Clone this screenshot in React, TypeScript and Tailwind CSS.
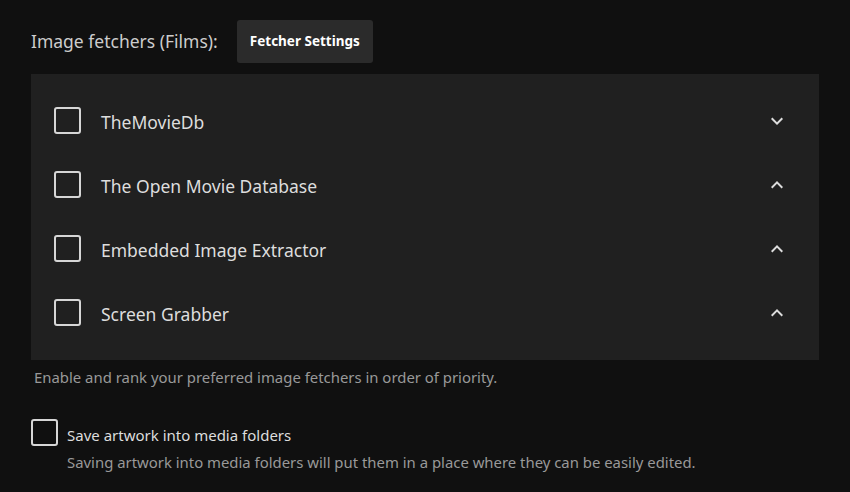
import { useState } from "react";

const fetchers = [
  { name: "TheMovieDb", open: true },
  { name: "The Open Movie Database", open: false },
  { name: "Embedded Image Extractor", open: false },
  { name: "Screen Grabber", open: false },
];

function Chevron({ down }: { down: boolean }) {
  return (
    <svg viewBox="0 0 24 24" className="w-6 h-6 fill-[#dddddd] mt-[1px]">
      {down ? (
        <path d="M16.59 8.59L12 13.17 7.41 8.59 6 10l6 6 6-6z" />
      ) : (
        <path d="M12 8l-6 6 1.41 1.41L12 10.83l4.59 4.58L18 14z" />
      )}
    </svg>
  );
}

function Box({ checked, onClick }: { checked: boolean; onClick: () => void }) {
  return (
    <button
      type="button"
      onClick={onClick}
      className={`w-[27px] h-[27px] shrink-0 rounded-[3px] border-2 border-[#d6d6d6] ${checked ? "bg-[#00a4dc]" : "bg-transparent"}`}
    />
  );
}

export default function App() {
  const [checked, setChecked] = useState<boolean[]>([false, false, false, false]);
  const [saveLocal, setSaveLocal] = useState(false);

  return (
    <div className="min-h-[492px] bg-[#101010] px-[31px] pt-[20px] font-['Noto_Sans',sans-serif] text-[#dddddd]">
      <div className="flex items-center gap-[19px]">
        <h3 className="text-[17.5px] text-[#cccccc]">Image fetchers (Films):</h3>
        <button
          type="button"
          className="h-[43px] px-[13px] rounded-[3px] bg-[#2b2b2b] text-[13.5px] font-bold text-white"
        >
          Fetcher Settings
        </button>
      </div>

      <div className="mt-[11px] bg-[#202020] pt-[14px] pb-[16px]">
        {fetchers.map((f, i) => (
          <div key={f.name} className="h-16 flex items-center pl-[23px] pr-[30px]">
            <Box
              checked={checked[i]}
              onClick={() => setChecked(checked.map((c, j) => (j === i ? !c : c)))}
            />
            <span className="ml-[20px] flex-1 text-[17.5px] pt-[5px]">{f.name}</span>
            <Chevron down={f.open} />
          </div>
        ))}
      </div>
      <p className="mt-[6px] pl-[3px] text-[14.9px] text-[#999999]">
        Enable and rank your preferred image fetchers in order of priority.
      </p>

      <div className="mt-[31px] flex items-center">
        <Box checked={saveLocal} onClick={() => setSaveLocal(!saveLocal)} />
        <span className="ml-[9px] text-[15px] pt-[4px]">Save artwork into media folders</span>
      </div>
      <p className="mt-[5px] pl-[36px] text-[14.9px] text-[#999999]">
        Saving artwork into media folders will put them in a place where they can be easily edited.
      </p>
    </div>
  );
}
